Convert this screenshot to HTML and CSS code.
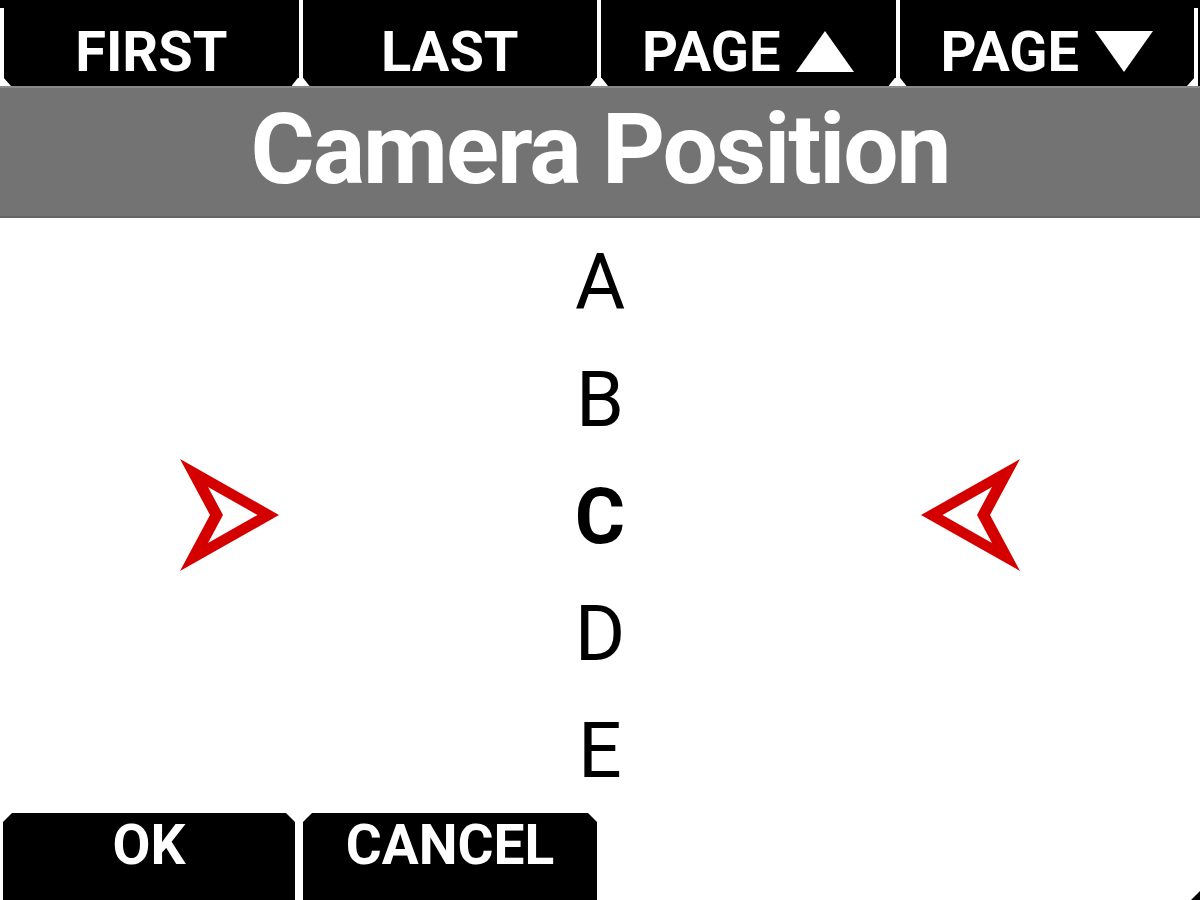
FILE: index.html
```html
<!DOCTYPE html>
<html lang="en">
<head>
<meta charset="utf-8">
<title>Camera Position</title>
<link rel="stylesheet" href="styles.css">
</head>
<body>
<div class="screen">
  <div class="topbar">
    <div class="sep sep-left"></div>
    <div class="tab">FIRST</div>
    <div class="sep"></div>
    <div class="tab">LAST</div>
    <div class="sep"></div>
    <div class="tab">PAGE<svg class="tri" viewBox="0 0 58 41"><polygon points="29,0 58,41 0,41" fill="#fff"/></svg></div>
    <div class="sep"></div>
    <div class="tab">PAGE<svg class="tri" viewBox="0 0 58 41"><polygon points="0,0 58,0 29,41" fill="#fff"/></svg></div>
    <div class="sep sep-right"></div>
  </div>
  <div class="titlebar">Camera Position</div>
  <div class="list">
    <div class="row">A</div>
    <div class="row">B</div>
    <div class="row row-selected">
      <svg class="arrow" viewBox="0 0 100 112"><path fill-rule="evenodd" fill="#d40000" d="M0 0 L99 56 L0 112 L30 56 Z M28 28 L43 56 L28 84 L77.5 56 Z"/></svg>
      <span class="letter">C</span>
      <svg class="arrow" viewBox="0 0 100 112"><path fill-rule="evenodd" fill="#d40000" d="M100 0 L1 56 L100 112 L70 56 Z M72 28 L57 56 L72 84 L22.5 56 Z"/></svg>
    </div>
    <div class="row">D</div>
    <div class="row">E</div>
  </div>
  <div class="bottombar">
    <div class="btn btn-ok">OK</div>
    <div class="btn btn-cancel">CANCEL</div>
    <div class="corner"></div>
  </div>
</div>
</body>
</html>
```

FILE: styles.css
```css
html, body {
  margin: 0;
  padding: 0;
  background: #ffffff;
}

.screen {
  width: 1200px;
  height: 900px;
  overflow: hidden;
  display: flex;
  flex-direction: column;
  font-family: Roboto, "Liberation Sans", sans-serif;
  background: #ffffff;
}

/* top soft-key bar */
.topbar {
  height: 86px;
  background: #000000;
  display: flex;
  flex-shrink: 0;
}

.tab {
  flex: 1;
  display: flex;
  justify-content: center;
  align-items: flex-start;
  padding-top: 24px;
  box-sizing: border-box;
  color: #ffffff;
  font-weight: 700;
  font-size: 56px;
  line-height: 56px;
}

.tri {
  width: 58px;
  height: 41px;
  margin-left: 16px;
  margin-top: 7px;
}

.sep {
  width: 4px;
  background: #ffffff;
  position: relative;
  flex-shrink: 0;
}

.sep::after {
  content: "";
  position: absolute;
  bottom: 0;
  left: -7px;
  width: 18px;
  height: 8px;
  background: #ffffff;
  clip-path: polygon(35% 0, 65% 0, 100% 100%, 0 100%);
}

.sep-left {
  margin-top: 8px;
}

.sep-left::after {
  left: 0;
  width: 11px;
  clip-path: polygon(0 0, 35% 0, 100% 100%, 0 100%);
}

.sep-right {
  margin-top: 8px;
  margin-right: 2px;
}

.sep-right::after {
  left: -7px;
  width: 11px;
  clip-path: polygon(65% 0, 100% 0, 100% 100%, 0 100%);
}

/* title */
.titlebar {
  height: 132px;
  box-sizing: border-box;
  background: #737373;
  border-top: 2px solid #8a8a8a;
  border-bottom: 2px solid #646464;
  color: #ffffff;
  font-weight: 700;
  font-size: 98px;
  letter-spacing: -2px;
  line-height: 124px;
  text-align: center;
  flex-shrink: 0;
}

/* list */
.list {
  padding-top: 7px;
  display: flex;
  flex-direction: column;
  flex-shrink: 0;
}

.row {
  height: 117px;
  line-height: 117px;
  font-size: 77px;
  font-weight: 400;
  color: #000000;
  text-align: center;
  display: flex;
  justify-content: center;
  align-items: center;
}

.row-selected {
  font-weight: 700;
  gap: 295px;
}

.arrow {
  width: 100px;
  height: 112px;
  margin-top: -6px;
}

/* bottom soft-key bar */
.bottombar {
  margin-top: 3px;
  height: 87px;
  display: flex;
  padding-left: 3px;
  gap: 8px;
  flex-shrink: 0;
}

.btn {
  background: #000000;
  color: #ffffff;
  font-weight: 700;
  font-size: 55px;
  line-height: 55px;
  padding-top: 5px;
  box-sizing: border-box;
  text-align: center;
  clip-path: polygon(9px 0, calc(100% - 9px) 0, 100% 9px, 100% 100%, 0 100%, 0 9px);
}

.btn-ok {
  width: 292px;
}

.btn-cancel {
  width: 294px;
}

.corner {
  margin-left: auto;
  align-self: flex-end;
  width: 9px;
  height: 9px;
  background: #000000;
  clip-path: polygon(100% 0, 100% 100%, 0 100%);
}
```
